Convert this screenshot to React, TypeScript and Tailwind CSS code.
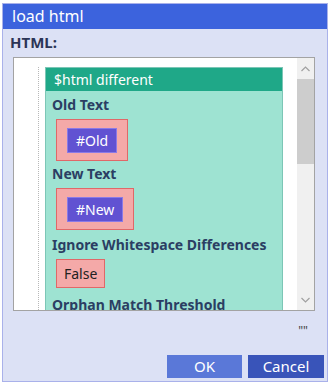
import React from "react";

const font = { fontFamily: '"Segoe UI", "Noto Sans", "Open Sans", sans-serif' };

function Field({ label, pb, children }: { label: string; pb: string; children?: React.ReactNode }) {
  return (
    <div className="flex flex-col">
      <div className="pl-[6px] text-[14px] font-bold leading-[16px] text-[#2b3e63] whitespace-nowrap">{label}</div>
      {children ? <div className={`flex pl-[10px] pt-[6px] ${pb}`}>{children}</div> : null}
    </div>
  );
}

function Tag({ text }: { text: string }) {
  return (
    <div className="flex h-[42px] items-center border border-[#e06868] bg-[#f4a9a8] px-[10px]">
      <div className="border border-[#8a7ae6] bg-[#6152d2] px-[8px] text-[14px] leading-[23px] text-white">
        {text}
      </div>
    </div>
  );
}

export default function App() {
  return (
    <div className="h-[385px] w-[330px] bg-white pl-[2px] pt-[3px]" style={font}>
      <div className="flex h-[379px] w-[326px] flex-col border border-[#a9b1ea] bg-[#dce1f5]">
        <div className="h-[25px] bg-[#3c63dd] pl-[9px] text-[16px] leading-[24px] text-white">load html</div>
        <div className="pl-[7px] pt-[4px] text-[15px] font-bold leading-[19px] text-[#2b3556]">HTML:</div>
        <div className="ml-[10px] mt-[5px] flex h-[254px] w-[302px] border border-[#a3a3a3] bg-white">
          <div className="flex flex-1 overflow-hidden pl-[24px] pt-[9px]">
            <div className="h-full w-0 border-l border-dotted border-[#b8b8b8]" />
            <div className="ml-[6px] flex h-[300px] w-[238px] flex-col border border-[#7cc6b6] bg-[#9ee3d2]">
              <div className="h-[23px] bg-[#1fa888] pl-[8px] text-[14px] leading-[23px] text-white">$html different</div>
              <div className="pt-[6px]">
                <Field label="Old Text" pb="pb-[5px]">
                  <Tag text="#Old" />
                </Field>
                <Field label="New Text" pb="pb-[7px]">
                  <Tag text="#New" />
                </Field>
                <Field label="Ignore Whitespace Differences" pb="pb-[9px]">
                  <div className="border border-[#e06868] bg-[#f4a9a8] px-[7px] text-[14px] leading-[27px] text-[#222]">
                    False
                  </div>
                </Field>
                <Field label="Orphan Match Threshold" pb="pb-[6px]" />
              </div>
            </div>
          </div>
          <div className="flex w-[17px] flex-col bg-[#f0f0f0]">
            <div className="flex h-[21px] items-center justify-center">
              <svg width="9" height="6" viewBox="0 0 9 6">
                <path d="M0.5 5 L4.5 1 L8.5 5" fill="none" stroke="#a0a0a0" strokeWidth="1.2" />
              </svg>
            </div>
            <div className="h-[85px] bg-[#cdcdcd]" />
            <div className="flex-1" />
            <div className="flex h-[21px] items-center justify-center">
              <svg width="9" height="6" viewBox="0 0 9 6">
                <path d="M0.5 1 L4.5 5 L8.5 1" fill="none" stroke="#a0a0a0" strokeWidth="1.2" />
              </svg>
            </div>
          </div>
        </div>
        <div className="flex justify-end pr-[19px] pt-[13px] text-[12px] leading-[14px] text-[#444]">""</div>
        <div className="mt-auto flex justify-end gap-[6px] pb-[3px] pr-[3px]">
          <div className="flex h-[23px] w-[75px] items-center justify-center bg-[#5a78d8] text-[15px] text-white">OK</div>
          <div className="flex h-[23px] w-[76px] items-center justify-center bg-[#3954b9] text-[15px] text-white">Cancel</div>
        </div>
      </div>
    </div>
  );
}
